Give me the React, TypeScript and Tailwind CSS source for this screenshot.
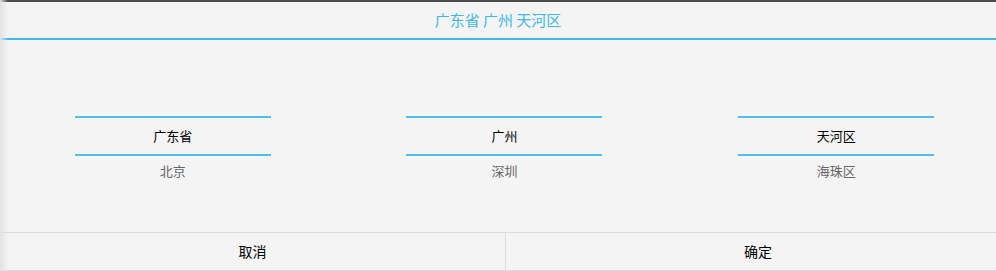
const provinces = ["广东省", "北京"];
const cities = ["广州", "深圳"];
const districts = ["天河区", "海珠区"];

function Wheel({ items }: { items: string[] }) {
  return (
    <div className="h-[192px] flex justify-center">
      <div className="w-[196px] flex flex-col">
        <div className="h-[76px]" />
        <div className="h-[40px] border-y-2 border-[#4fc0ee] flex items-center justify-center text-[13px] text-black">
          {items[0]}
        </div>
        <div className="h-[30px] flex items-center justify-center text-[13px] text-[#666]">{items[1]}</div>
      </div>
    </div>
  );
}

export default function App() {
  return (
    <div className="w-[996px] h-[271px] overflow-hidden bg-[#f4f4f4] relative" style={{ fontFamily: '"Noto Sans CJK SC", "Noto Sans", sans-serif' }}>
      <div className="absolute left-0 top-0 bottom-0 w-[8px] bg-gradient-to-r from-[#e2e2e2] to-transparent pointer-events-none" />
      <div className="h-[2px] bg-[#4a4a4a]" />
      <div className="h-[36px] flex items-center justify-center text-[15px] text-[#3db8e8]">广东省 广州 天河区</div>
      <div className="h-[2px] bg-[#3cb9ea]" />
      <div className="w-[995px] ml-[7px] grid grid-cols-3">
        <Wheel items={provinces} />
        <Wheel items={cities} />
        <Wheel items={districts} />
      </div>
      <div className="w-[1010px] h-[39px] border-y border-[#dcdcdc] flex text-[14px] text-black">
        <div className="w-[506px] flex items-center justify-center border-r border-[#dcdcdc]">取消</div>
        <div className="flex-1 flex items-center justify-center">确定</div>
      </div>
    </div>
  );
}
